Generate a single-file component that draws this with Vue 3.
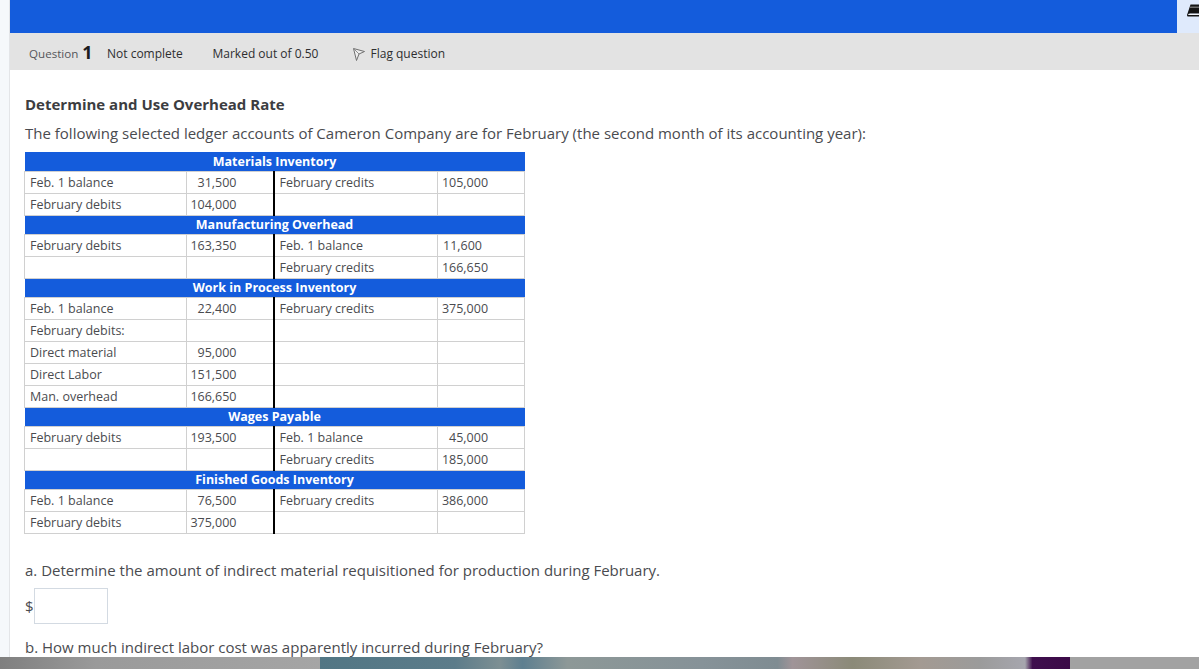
<script setup>
const ledgers = [
  {
    title: 'Materials Inventory',
    rows: [
      ['Feb. 1 balance', '31,500', 'February credits', '105,000'],
      ['February debits', '104,000', '', '']
    ]
  },
  {
    title: 'Manufacturing Overhead',
    rows: [
      ['February debits', '163,350', 'Feb. 1 balance', '11,600', 'left'],
      ['', '', 'February credits', '166,650']
    ]
  },
  {
    title: 'Work in Process Inventory',
    rows: [
      ['Feb. 1 balance', '22,400', 'February credits', '375,000'],
      ['February debits:', '', '', ''],
      ['Direct material', '95,000', '', ''],
      ['Direct Labor', '151,500', '', ''],
      ['Man. overhead', '166,650', '', '']
    ]
  },
  {
    title: 'Wages Payable',
    rows: [
      ['February debits', '193,500', 'Feb. 1 balance', '45,000'],
      ['', '', 'February credits', '185,000']
    ]
  },
  {
    title: 'Finished Goods Inventory',
    rows: [
      ['Feb. 1 balance', '76,500', 'February credits', '386,000'],
      ['February debits', '375,000', '', '']
    ]
  }
]
</script>

<template>
  <div class="screen">
    <div class="page">
      <aside class="rail"></aside>
      <main class="main">
        <div class="topbar">
          <div class="topbar-fill"></div>
          <div class="topbar-side">
            <svg class="book" width="12" height="13" viewBox="0 0 12 13">
              <path d="M3.5 0.5 L12 0.5 L12 9.5 L2.5 9.5 L1.8 11 L12 11 L12 12.5 L1 12.5 Q0 12.5 0 11 Z" fill="#141414" />
              <path d="M3.2 2.5 L12 2.5 L12 4 L2.8 4 Z" fill="#6d6d6d" />
              <path d="M1.2 10.4 L12 10.4" stroke="#f4f6fa" stroke-width="1" />
            </svg>
          </div>
        </div>

        <div class="question-bar">
          <span class="q-label">Question <b>1</b></span>
          <span class="q-state">Not complete</span>
          <span class="q-marks">Marked out of 0.50</span>
          <span class="q-flag">
            <svg width="12" height="13" viewBox="0 0 12 13">
              <path d="M0.5 0.5 L11.5 3.5 L6 6 L3.5 12.5 Z" fill="#eeeeee" stroke="#6f6f6f" stroke-width="1" stroke-linejoin="round" />
              <path d="M0.5 0.5 L6 6" stroke="#8f8f8f" stroke-width="1" />
            </svg>
            Flag question
          </span>
        </div>

        <div class="content">
          <h3>Determine and Use Overhead Rate</h3>
          <p class="intro">The following selected ledger accounts of Cameron Company are for February (the second month of its accounting year):</p>

          <table class="ledger">
            <colgroup>
              <col class="c1" />
              <col class="c2" />
              <col class="c3" />
              <col class="c4" />
            </colgroup>
            <tbody v-for="ledger in ledgers" :key="ledger.title">
              <tr class="head">
                <th colspan="4">{{ ledger.title }}</th>
              </tr>
              <tr v-for="(row, i) in ledger.rows" :key="i">
                <td>{{ row[0] }}</td>
                <td class="num split">{{ row[1] }}</td>
                <td>{{ row[2] }}</td>
                <td :class="row[4] === 'left' ? '' : 'num'">{{ row[3] }}</td>
              </tr>
            </tbody>
          </table>

          <p class="part-a">a. Determine the amount of indirect material requisitioned for production during February.</p>
          <div class="answer">
            <span>$</span>
            <input type="text" />
          </div>
          <p class="part-b">b. How much indirect labor cost was apparently incurred during February?</p>
        </div>
      </main>
    </div>

    <div class="dock">
      <div class="dock-left"></div>
      <div class="dock-photo"></div>
      <div class="dock-right"></div>
    </div>
  </div>
</template>

<style>
html, body {
  margin: 0;
  overflow: hidden;
}
</style>

<style scoped>
.screen {
  width: 1199px;
  height: 669px;
  display: flex;
  flex-direction: column;
  overflow: hidden;
  font-family: "Open Sans", "Liberation Sans", sans-serif;
  color: #3f4044;
  background: #fff;
}

.page {
  flex: 1;
  min-height: 0;
  display: flex;
  overflow: hidden;
}

.rail {
  width: 9px;
  flex: none;
  background: #f5f8fb;
  border-right: 1px solid #e3e5e8;
}

.main {
  flex: 1;
  min-width: 0;
}

.topbar {
  height: 33px;
  display: flex;
}

.topbar-fill {
  flex: 1;
  background: #145cdc;
}

.topbar-side {
  width: 22px;
  background: #dfeafc;
  position: relative;
}

.book {
  position: absolute;
  left: 10px;
  top: 4px;
}

.question-bar {
  height: 37px;
  box-sizing: border-box;
  padding: 4px 0 0 19px;
  background: #e3e3e3;
  display: flex;
  align-items: center;
  font-size: 12px;
  color: #2e2e30;
}

.q-label {
  width: 78px;
  display: flex;
  align-items: center;
  gap: 4px;
  color: #55565a;
  font-size: 11.6px;
  white-space: nowrap;
}

.q-label b {
  font-size: 18px;
  font-weight: 700;
  color: #1c1c1e;
  line-height: 1;
  margin-top: -3px;
}

.q-state {
  width: 105.5px;
  font-size: 12px;
}

.q-marks {
  width: 140px;
}

.q-flag {
  display: flex;
  align-items: center;
  gap: 6px;
}

.q-flag svg {
  margin-top: 2px;
}

.content {
  padding: 24px 0 0 15px;
}

h3 {
  margin: 0;
  font-size: 15px;
  line-height: 20px;
  font-weight: 700;
  color: #3c3d41;
}

.intro {
  margin: 8px 0 8px;
  font-size: 15px;
  line-height: 22px;
  color: #4a4b4f;
}

.ledger {
  width: 500px;
  margin-left: -1px;
  table-layout: fixed;
  border-collapse: collapse;
  font-size: 12.5px;
  color: #4a4b4f;
}

.c1 { width: 162px; }
.c2 { width: 87px; }
.c3 { width: 164px; }
.c4 { width: 87px; }

.head th {
  height: 18px;
  padding: 0;
  background: #145cdc;
  color: #fff;
  font-size: 12.5px;
  line-height: 18px;
  font-weight: 700;
  text-align: center;
}

tbody:first-of-type .head th {
  height: 19px;
}

td {
  height: 21px;
  padding: 0 0 0 5px;
  border: 1px solid #d0d0d0;
  line-height: 21px;
  white-space: nowrap;
}

td.num {
  text-align: right;
  padding-right: 36px;
  padding-left: 0;
}

td.split {
  border-right: 2px solid #000;
}

.part-a {
  margin: 25px 0 0;
  font-size: 15px;
  line-height: 22px;
  color: #4a4b4f;
}

.answer {
  display: flex;
  align-items: center;
  margin-top: 7px;
  font-size: 15px;
  color: #4a4b4f;
}

.answer input {
  width: 74px;
  height: 36px;
  box-sizing: border-box;
  margin-left: 0;
  padding: 0;
  border: 1px solid #d3dae2;
  background: #fff;
}

.part-b {
  margin: 12px 0 0;
  font-size: 15px;
  line-height: 22px;
  color: #4a4b4f;
}

.dock {
  height: 12px;
  flex: none;
  display: flex;
  box-shadow: inset 0 1px 1px rgba(0, 0, 0, 0.4);
}

.dock-left {
  width: 320px;
  background: linear-gradient(90deg, #7f7f7f 0%, #9a9a9a 30%, #a5a5a5 100%);
}

.dock-photo {
  width: 750px;
  background: linear-gradient(90deg, #527684 0%, #5c7c8a 18%, #7d8f93 24%, #5e7f90 27%, #8d9897 33%, #869298 51%, #7f8c92 61%, #a09498 63%, #8b8a78 71%, #a39a92 80%, #9b9b9b 88%, #a6a6ae 94%, #3f0f4d 95%, #3c0a48 100%);
}

.dock-right {
  flex: 1;
  background: #a2a2a2;
}
</style>
